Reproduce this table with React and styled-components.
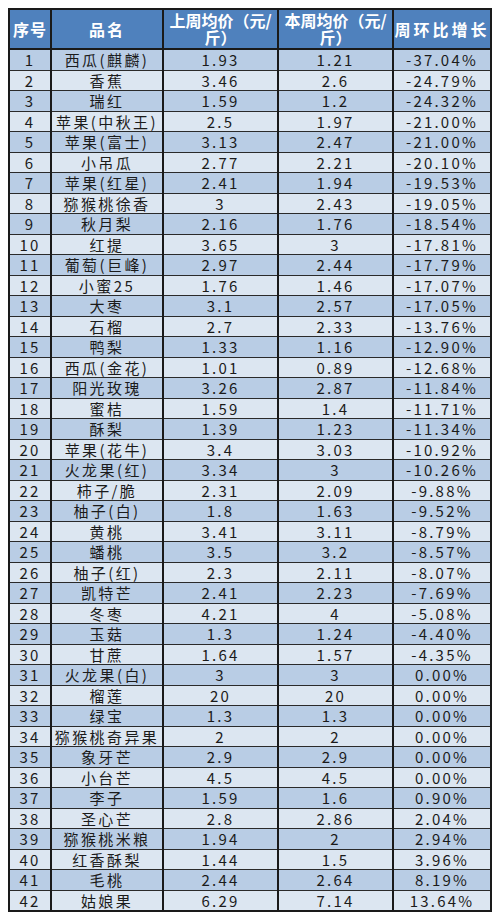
import styled, { createGlobalStyle } from 'styled-components';

const GlobalStyle = createGlobalStyle`
  html, body {
    margin: 0;
    padding: 0;
    background: #ffffff;
  }
  body {
    font-family: 'Noto Sans CJK SC', 'Liberation Sans', sans-serif;
  }
`;

const Page = styled.div`
  width: 500px;
  height: 919px;
  padding: 8px 0 0 8px;
  box-sizing: border-box;
`;

const Table = styled.table`
  border-collapse: collapse;
  width: 482px;
  table-layout: fixed;
  border: 2px solid #1a1a1a;
`;

const HeadCell = styled.th`
  background: #4f81bd;
  color: #ffffff;
  font-weight: 700;
  font-size: 16px;
  line-height: 17px;
  letter-spacing: ${(p) => p.$spacing || '1px'};
  height: 38px;
  padding: 0;
  text-align: center;
  border: 2px solid #1a1a1a;
  white-space: pre;
  overflow: hidden;
`;

const Row = styled.tr`
  background: ${(p) => (p.$odd ? '#b9cde5' : '#dce6f1')};
`;

const Cell = styled.td`
  height: 19.5px;
  padding: 0;
  text-align: center;
  font-size: 15px;
  line-height: 19px;
  letter-spacing: ${(p) => (p.$num ? '2.2px' : '2.4px')};
  color: #1b1b1b;
  border-left: 2px solid #1a1a1a;
  border-right: 2px solid #1a1a1a;
  border-top: 1px solid #2a2a2a;
  border-bottom: 1px solid #2a2a2a;
  white-space: nowrap;
  overflow: hidden;
`;

const columns = [
  { label: '序号', width: 42 },
  { label: '品名', width: 112, spacing: '2px' },
  { label: '上周均价（元/\n斤）', width: 115, spacing: '0px' },
  { label: '本周均价（元/\n斤）', width: 115, spacing: '0px' },
  { label: '周环比增长', width: 98, spacing: '3px' },
];

const rows = [
  ['西瓜(麒麟)', '1.93', '1.21', '-37.04%'],
  ['香蕉', '3.46', '2.6', '-24.79%'],
  ['瑞红', '1.59', '1.2', '-24.32%'],
  ['苹果(中秋王)', '2.5', '1.97', '-21.00%'],
  ['苹果(富士)', '3.13', '2.47', '-21.00%'],
  ['小吊瓜', '2.77', '2.21', '-20.10%'],
  ['苹果(红星)', '2.41', '1.94', '-19.53%'],
  ['猕猴桃徐香', '3', '2.43', '-19.05%'],
  ['秋月梨', '2.16', '1.76', '-18.54%'],
  ['红提', '3.65', '3', '-17.81%'],
  ['葡萄(巨峰)', '2.97', '2.44', '-17.79%'],
  ['小蜜25', '1.76', '1.46', '-17.07%'],
  ['大枣', '3.1', '2.57', '-17.05%'],
  ['石榴', '2.7', '2.33', '-13.76%'],
  ['鸭梨', '1.33', '1.16', '-12.90%'],
  ['西瓜(金花)', '1.01', '0.89', '-12.68%'],
  ['阳光玫瑰', '3.26', '2.87', '-11.84%'],
  ['蜜桔', '1.59', '1.4', '-11.71%'],
  ['酥梨', '1.39', '1.23', '-11.34%'],
  ['苹果(花牛)', '3.4', '3.03', '-10.92%'],
  ['火龙果(红)', '3.34', '3', '-10.26%'],
  ['柿子/脆', '2.31', '2.09', '-9.88%'],
  ['柚子(白)', '1.8', '1.63', '-9.52%'],
  ['黄桃', '3.41', '3.11', '-8.79%'],
  ['蟠桃', '3.5', '3.2', '-8.57%'],
  ['柚子(红)', '2.3', '2.11', '-8.07%'],
  ['凯特芒', '2.41', '2.23', '-7.69%'],
  ['冬枣', '4.21', '4', '-5.08%'],
  ['玉菇', '1.3', '1.24', '-4.40%'],
  ['甘蔗', '1.64', '1.57', '-4.35%'],
  ['火龙果(白)', '3', '3', '0.00%'],
  ['榴莲', '20', '20', '0.00%'],
  ['绿宝', '1.3', '1.3', '0.00%'],
  ['猕猴桃奇异果', '2', '2', '0.00%'],
  ['象牙芒', '2.9', '2.9', '0.00%'],
  ['小台芒', '4.5', '4.5', '0.00%'],
  ['李子', '1.59', '1.6', '0.90%'],
  ['圣心芒', '2.8', '2.86', '2.04%'],
  ['猕猴桃米粮', '1.94', '2', '2.94%'],
  ['红香酥梨', '1.44', '1.5', '3.96%'],
  ['毛桃', '2.44', '2.64', '8.19%'],
  ['姑娘果', '6.29', '7.14', '13.64%'],
];

export default function App() {
  return (
    <>
      <GlobalStyle />
      <Page>
        <Table>
          <colgroup>
            {columns.map((c) => (
              <col key={c.label} style={{ width: c.width }} />
            ))}
          </colgroup>
          <thead>
            <tr>
              {columns.map((c) => (
                <HeadCell key={c.label} $spacing={c.spacing}>
                  {c.label}
                </HeadCell>
              ))}
            </tr>
          </thead>
          <tbody>
            {rows.map(([name, last, cur, change], i) => (
              <Row key={i} $odd={i % 2 === 0}>
                <Cell $num>{i + 1}</Cell>
                <Cell>{name}</Cell>
                <Cell $num>{last}</Cell>
                <Cell $num>{cur}</Cell>
                <Cell $num>{change}</Cell>
              </Row>
            ))}
          </tbody>
        </Table>
      </Page>
    </>
  );
}
